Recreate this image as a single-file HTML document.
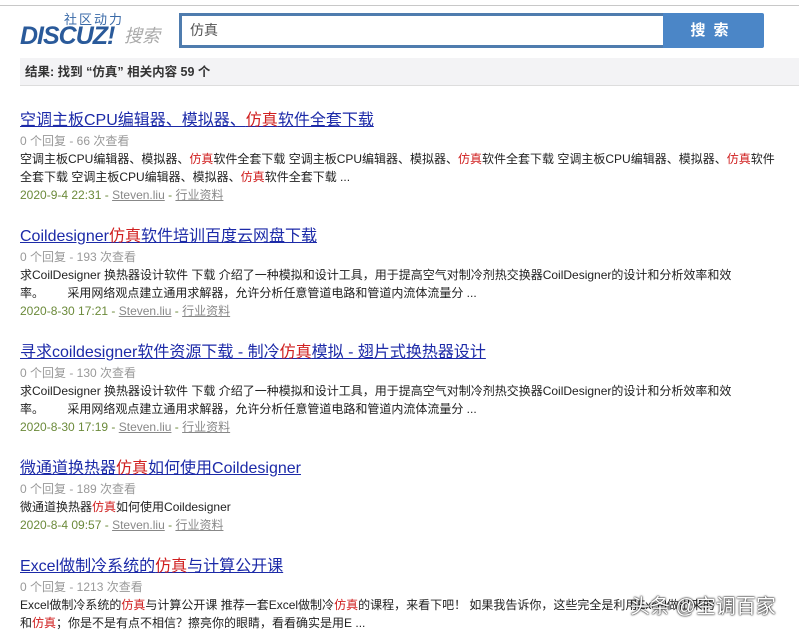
<!DOCTYPE html>
<html><head><meta charset="utf-8"><style>
body{margin:0;width:799px;height:630px;overflow:hidden;background:#fff;font-family:"Liberation Sans","Noto Sans CJK SC",sans-serif;position:relative}
.topline{position:absolute;left:0;top:5px;width:799px;height:1px;background:#c8c8c8}
.logo{position:absolute;left:20px;top:22px;font-style:italic;font-weight:bold;font-size:25px;color:#2a5a9a;letter-spacing:-1px}
.sq{position:absolute;left:64px;top:9px;font-size:13px;color:#3a6aa8;letter-spacing:2px}
.ss{position:absolute;left:124px;top:22px;font-size:18px;color:#aaa;font-style:italic}
.box{position:absolute;left:179px;top:13px;width:478px;height:29px;border:3px solid #4f7cae;border-right:none;font-size:14px;color:#555;line-height:29px;padding-left:8px;box-sizing:content-box}
.btn{position:absolute;left:663px;top:13px;width:101px;height:35px;background:#4b86c7;color:#fff;font-size:15px;font-weight:bold;text-align:center;line-height:35px;letter-spacing:8px;border-radius:0 2px 2px 0}
.bar{position:absolute;left:20px;top:58px;width:779px;height:28px;background:#f3f3f5;border-bottom:1px solid #ddd;font-size:12.5px;font-weight:bold;color:#333;line-height:28px;padding-left:5px;box-sizing:border-box}
.item{position:absolute;left:20px;width:779px}
.t{font-size:16px;color:#1c2aa8;text-decoration:underline;line-height:20px;height:21px;white-space:nowrap}
.m{font-size:12px;color:#999;line-height:18px}
.s{font-size:12px;color:#222;line-height:18px}
.d{font-size:12px;color:#6b8a3a;line-height:18px}
.d u{color:#888}
.r{color:#d02020}
.wm{position:absolute;left:630px;top:590px;font-size:20px;color:#fff;text-shadow:0 0 2px #000,0 0 1px #000;white-space:nowrap}
</style></head><body>
<div class="topline"></div>
<div class="sq">社区动力</div>
<div class="logo">DISCUZ!</div>
<div class="ss">搜索</div>
<div class="box">仿真</div>
<div class="btn">搜索</div>
<div class="bar">结果: 找到 “仿真” 相关内容 59 个</div>

<div class="item" style="top:111px">
<div class="t">空调主板CPU编辑器、模拟器、<span class="r">仿真</span>软件全套下载</div>
<div class="m">0 个回复 - 66 次查看</div>
<div class="s">空调主板CPU编辑器、模拟器、<span class="r">仿真</span>软件全套下载 空调主板CPU编辑器、模拟器、<span class="r">仿真</span>软件全套下载 空调主板CPU编辑器、模拟器、<span class="r">仿真</span>软件<br>全套下载 空调主板CPU编辑器、模拟器、<span class="r">仿真</span>软件全套下载 ...</div>
<div class="d">2020-9-4 22:31 - <u>Steven.liu</u> - <u>行业资料</u></div>
</div>

<div class="item" style="top:227px">
<div class="t">Coildesigner<span class="r">仿真</span>软件培训百度云网盘下载</div>
<div class="m">0 个回复 - 193 次查看</div>
<div class="s">求CoilDesigner 换热器设计软件 下载 介绍了一种模拟和设计工具，用于提高空气对制冷剂热交换器CoilDesigner的设计和分析效率和效<br>率。&nbsp;&nbsp;&nbsp;&nbsp;&nbsp;&nbsp;&nbsp;采用网络观点建立通用求解器，允许分析任意管道电路和管道内流体流量分 ...</div>
<div class="d">2020-8-30 17:21 - <u>Steven.liu</u> - <u>行业资料</u></div>
</div>

<div class="item" style="top:343px">
<div class="t">寻求coildesigner软件资源下载 - 制冷<span class="r">仿真</span>模拟 - 翅片式换热器设计</div>
<div class="m">0 个回复 - 130 次查看</div>
<div class="s">求CoilDesigner 换热器设计软件 下载 介绍了一种模拟和设计工具，用于提高空气对制冷剂热交换器CoilDesigner的设计和分析效率和效<br>率。&nbsp;&nbsp;&nbsp;&nbsp;&nbsp;&nbsp;&nbsp;采用网络观点建立通用求解器，允许分析任意管道电路和管道内流体流量分 ...</div>
<div class="d">2020-8-30 17:19 - <u>Steven.liu</u> - <u>行业资料</u></div>
</div>

<div class="item" style="top:459px">
<div class="t">微通道换热器<span class="r">仿真</span>如何使用Coildesigner</div>
<div class="m">0 个回复 - 189 次查看</div>
<div class="s">微通道换热器<span class="r">仿真</span>如何使用Coildesigner</div>
<div class="d">2020-8-4 09:57 - <u>Steven.liu</u> - <u>行业资料</u></div>
</div>

<div class="item" style="top:557px">
<div class="t">Excel做制冷系统的<span class="r">仿真</span>与计算公开课</div>
<div class="m">0 个回复 - 1213 次查看</div>
<div class="s">Excel做制冷系统的<span class="r">仿真</span>与计算公开课 推荐一套Excel做制冷<span class="r">仿真</span>的课程，来看下吧！ 如果我告诉你，这些完全是利用Excel做出来的<br>和<span class="r">仿真</span>；你是不是有点不相信？擦亮你的眼睛，看看确实是用E ...</div>
</div>
<div class="wm">头条 @空调百家</div>
</body></html>
